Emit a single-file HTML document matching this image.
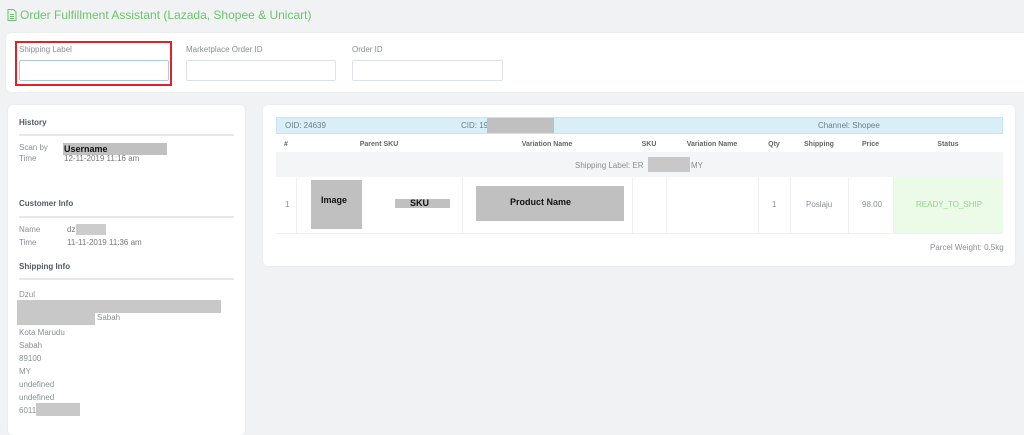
<!DOCTYPE html>
<html><head><meta charset="utf-8"><style>
*{margin:0;padding:0;box-sizing:border-box}
body{width:1024px;height:421px;background:#f1f2f3;font-family:"Liberation Sans",sans-serif;position:relative;overflow:hidden;color:#8a8f94;font-size:8px}
.a{position:absolute;white-space:nowrap}
.card{position:absolute;background:#fff;border-radius:5px;box-shadow:0 0 2px rgba(0,0,0,.06)}
.inp{position:absolute;border:1px solid #dfe2e5;border-radius:2px;background:#fff}
.g{position:absolute;background:#c0c0c0}
.h{font-weight:bold;color:#4f5a66;font-size:8px}
.line{position:absolute;height:2px;background:#e6e8ea;left:19px;width:215px}
.th{font-weight:bold;color:#666;font-size:7px;text-align:center}
.vl{position:absolute;width:1px;background:#eef0f1;top:177px;height:56px}
</style></head><body>
<svg class="a" style="left:7px;top:9px" width="10" height="12" viewBox="0 0 10 12"><path d="M1 .5h5.5L9 3v8.5H1z" fill="none" stroke="#6cc46c"/><path d="M3 5.5h4M3 7.5h4M3 9.5h4" stroke="#6cc46c"/></svg>
<div class="a" style="left:20px;top:8px;font-size:12px;color:#6cc46c">Order Fulfillment Assistant (Lazada, Shopee &amp; Unicart)</div>
<div class="card" style="left:6px;top:33px;width:1030px;height:59px"></div>
<div class="a" style="left:15px;top:41px;width:157px;height:45px;border:2px solid #e2202a"></div>
<div class="a" style="left:19px;top:45px">Shipping Label</div>
<div class="inp" style="left:19px;top:60px;width:150px;height:21px;border-color:#a8cbe6"></div>
<div class="a" style="left:186px;top:45px">Marketplace Order ID</div>
<div class="inp" style="left:186px;top:60px;width:150px;height:21px"></div>
<div class="a" style="left:352px;top:45px">Order ID</div>
<div class="inp" style="left:352px;top:60px;width:151px;height:21px"></div>

<div class="card" style="left:8px;top:105px;width:237px;height:330px"></div>
<div class="a h" style="left:19px;top:118px">History</div>
<div class="line" style="top:134px"></div>
<div class="a" style="left:19px;top:143px">Scan by</div>
<div class="g" style="left:63px;top:143px;width:104px;height:12px"></div>
<div class="a" style="left:64px;top:144px;font-weight:bold;color:#111;font-size:9px">Username</div>
<div class="a" style="left:19px;top:154px">Time</div>
<div class="a" style="left:64px;top:154px;color:#777">12-11-2019 11:16 am</div>
<div class="a h" style="left:19px;top:199px">Customer Info</div>
<div class="line" style="top:216px"></div>
<div class="a" style="left:19px;top:225px">Name</div>
<div class="a" style="left:67px;top:225px;color:#777">dz</div>
<div class="g" style="left:76px;top:224px;width:30px;height:11px;background:#ccc"></div>
<div class="a" style="left:19px;top:238px">Time</div>
<div class="a" style="left:67px;top:238px;color:#777">11-11-2019 11:36 am</div>
<div class="a h" style="left:19px;top:262px">Shipping Info</div>
<div class="line" style="top:278px"></div>
<div class="a" style="left:19px;top:288px;line-height:13px">Dzul</div>
<div class="g" style="left:17px;top:300px;width:204px;height:13px;background:#c8c8c8"></div>
<div class="g" style="left:17px;top:313px;width:78px;height:12px;background:#c8c8c8"></div>
<div class="a" style="left:97px;top:313px">Sabah</div>
<div class="a" style="left:19px;top:326px;line-height:13px">Kota Marudu<br>Sabah<br>89100<br>MY<br>undefined<br>undefined<br>6011</div>
<div class="g" style="left:36px;top:403px;width:44px;height:13px;background:#c8c8c8"></div>

<div class="card" style="left:263px;top:105px;width:752px;height:161px"></div>
<div class="a" style="left:276px;top:117px;width:727px;height:17px;background:#d8eff8;border:1px solid #c6e6f3"></div>
<div class="a" style="left:285px;top:121px;color:#6b7e8c">OID: 24639</div>
<div class="a" style="left:461px;top:121px;color:#6b7e8c">CID: 19</div>
<div class="g" style="left:487px;top:118px;width:67px;height:15px"></div>
<div class="a" style="left:818px;top:121px;color:#6b7e8c">Channel: Shopee</div>
<div class="a th" style="left:276px;top:141px;width:20px">#</div>
<div class="a th" style="left:296px;top:141px;width:166px">Parent SKU</div>
<div class="a th" style="left:462px;top:141px;width:170px">Variation Name</div>
<div class="a th" style="left:632px;top:141px;width:34px">SKU</div>
<div class="a th" style="left:666px;top:141px;width:92px">Variation Name</div>
<div class="a th" style="left:758px;top:141px;width:32px">Qty</div>
<div class="a th" style="left:790px;top:141px;width:58px">Shipping</div>
<div class="a th" style="left:848px;top:141px;width:45px">Price</div>
<div class="a th" style="left:893px;top:141px;width:110px">Status</div>
<div class="a" style="left:276px;top:152px;width:727px;height:25px;background:#f3f5f6"></div>
<div class="a" style="left:575px;top:161px">Shipping Label: ER</div>
<div class="g" style="left:648px;top:157px;width:42px;height:15px;background:#c8c8c8"></div>
<div class="a" style="left:691px;top:161px">MY</div>
<div class="a" style="left:893px;top:177px;width:110px;height:56px;background:#ecfbe8"></div>
<div class="vl" style="left:296px"></div><div class="vl" style="left:462px"></div><div class="vl" style="left:632px"></div><div class="vl" style="left:666px"></div><div class="vl" style="left:758px"></div><div class="vl" style="left:790px"></div><div class="vl" style="left:848px"></div><div class="vl" style="left:893px"></div>
<div class="a" style="left:276px;top:233px;width:727px;height:1px;background:#eef0f1"></div>
<div class="a" style="left:285px;top:200px">1</div>
<div class="g" style="left:311px;top:180px;width:51px;height:49px"></div>
<div class="a" style="left:321px;top:195px;font-weight:bold;color:#111;font-size:9px">Image</div>
<div class="g" style="left:395px;top:199px;width:55px;height:9px"></div>
<div class="a" style="left:410px;top:198px;font-weight:bold;color:#111;font-size:9px">SKU</div>
<div class="g" style="left:476px;top:186px;width:148px;height:35px"></div>
<div class="a" style="left:510px;top:197px;font-weight:bold;color:#111;font-size:9px">Product Name</div>
<div class="a" style="left:772px;top:200px">1</div>
<div class="a" style="left:806px;top:200px">Poslaju</div>
<div class="a" style="left:862px;top:200px">98.00</div>
<div class="a" style="left:916px;top:200px;color:#8fd48a">READY_TO_SHIP</div>
<div class="a" style="left:930px;top:243px">Parcel Weight: 0.5kg</div>
</body></html>
